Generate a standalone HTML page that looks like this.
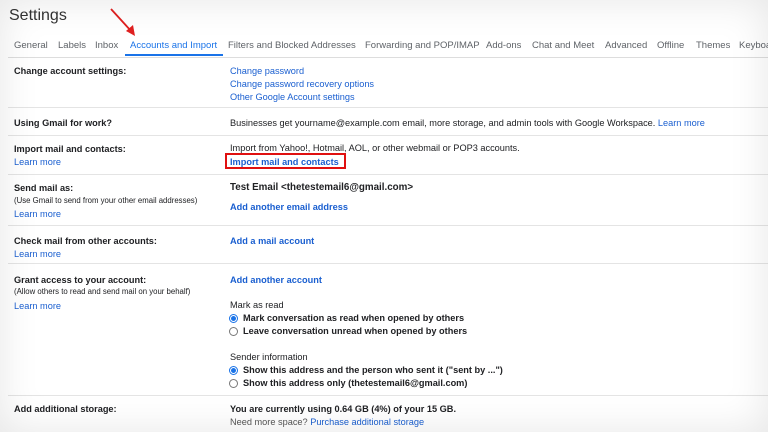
<!DOCTYPE html><html><head><style>
body{margin:0;width:768px;height:432px;overflow:hidden;background:#fff;font-family:"Liberation Sans",sans-serif;font-size:9.2px;color:#202124;position:relative}
.t{position:absolute;white-space:nowrap;line-height:12px;margin-top:2px}
.b{font-weight:bold}
.l{color:#1a5fd0}
.s{font-size:7.8px}
.g{color:#5f6368;font-size:9.5px}
.hr{position:absolute;left:8px;width:760px;height:1px;background:#e4e4e4}
.r{position:absolute;width:7px;height:7px;border-radius:50%;border:1px solid #777;left:229px;margin-top:2px}
.r.on{border-color:#1a73e8;background:radial-gradient(#1a73e8 45%,#fff 55%)}
.vig{position:absolute;inset:0;pointer-events:none;box-shadow:inset 0 0 40px rgba(0,0,0,.1)}
</style></head><body>
<div class="t" style="left:9px;top:4px;font-size:16px;line-height:20px;color:#333">Settings</div>
<div class="t g" style="left:14px;top:38px">General</div>
<div class="t g" style="left:58px;top:38px">Labels</div>
<div class="t g" style="left:95px;top:38px">Inbox</div>
<div class="t" style="left:130px;top:38px;color:#1a73e8;font-size:9.5px">Accounts and Import</div>
<div style="position:absolute;left:125px;top:54px;width:98px;height:2px;background:#1a73e8"></div>
<div class="t g" style="left:228px;top:38px">Filters and Blocked Addresses</div>
<div class="t g" style="left:365px;top:38px">Forwarding and POP/IMAP</div>
<div class="t g" style="left:486px;top:38px">Add-ons</div>
<div class="t g" style="left:532px;top:38px">Chat and Meet</div>
<div class="t g" style="left:605px;top:38px">Advanced</div>
<div class="t g" style="left:657px;top:38px">Offline</div>
<div class="t g" style="left:696px;top:38px">Themes</div>
<div class="t g" style="left:739px;top:38px">Keyboard</div>
<svg style="position:absolute;left:108px;top:6px" width="32" height="32"><line x1="3" y1="3" x2="24" y2="26" stroke="#e02020" stroke-width="1.8"/><path d="M27 30 L18 25 L25 19 Z" fill="#e02020"/></svg>
<div class="hr" style="top:57px;background:#ddd"></div>

<div class="t b" style="left:14px;top:63px">Change account settings:</div>
<div class="t l" style="left:230px;top:63px">Change password</div>
<div class="t l" style="left:230px;top:76px">Change password recovery options</div>
<div class="t l" style="left:230px;top:89px">Other Google Account settings</div>
<div class="hr" style="top:107px"></div>

<div class="t b" style="left:14px;top:115px">Using Gmail for work?</div>
<div class="t" style="left:230px;top:115px">Businesses get yourname@example.com email, more storage, and admin tools with Google Workspace. <span class="l">Learn more</span></div>
<div class="hr" style="top:135px"></div>

<div class="t b" style="left:14px;top:141px">Import mail and contacts:</div>
<div class="t l" style="left:14px;top:154px">Learn more</div>
<div class="t" style="left:230px;top:140px">Import from Yahoo!, Hotmail, AOL, or other webmail or POP3 accounts.</div>
<div class="t b l" style="left:230px;top:154px">Import mail and contacts</div>
<div style="position:absolute;left:225px;top:153px;width:117px;height:12px;border:2px solid #e01010"></div>
<div class="hr" style="top:174px"></div>

<div class="t b" style="left:14px;top:180px">Send mail as:</div>
<div class="t s" style="left:14px;top:193px">(Use Gmail to send from your other email addresses)</div>
<div class="t l" style="left:14px;top:206px">Learn more</div>
<div class="t b" style="left:230px;top:180px;font-size:9.8px">Test Email &lt;thetestemail6@gmail.com&gt;</div>
<div class="t b l" style="left:230px;top:199px">Add another email address</div>
<div class="hr" style="top:225px"></div>

<div class="t b" style="left:14px;top:233px">Check mail from other accounts:</div>
<div class="t l" style="left:14px;top:246px">Learn more</div>
<div class="t b l" style="left:230px;top:233px">Add a mail account</div>
<div class="hr" style="top:263px"></div>

<div class="t b" style="left:14px;top:272px">Grant access to your account:</div>
<div class="t s" style="left:14px;top:284px">(Allow others to read and send mail on your behalf)</div>
<div class="t l" style="left:14px;top:298px">Learn more</div>
<div class="t b l" style="left:230px;top:272px">Add another account</div>
<div class="t" style="left:230px;top:297px">Mark as read</div>
<div class="r on" style="top:312px"></div><div class="t b" style="left:243px;top:310px">Mark conversation as read when opened by others</div>
<div class="r" style="top:325px"></div><div class="t b" style="left:243px;top:323px">Leave conversation unread when opened by others</div>
<div class="t" style="left:230px;top:349px">Sender information</div>
<div class="r on" style="top:364px"></div><div class="t b" style="left:243px;top:362px">Show this address and the person who sent it ("sent by ...")</div>
<div class="r" style="top:377px"></div><div class="t b" style="left:243px;top:375px">Show this address only (thetestemail6@gmail.com)</div>
<div class="hr" style="top:395px"></div>

<div class="t b" style="left:14px;top:401px">Add additional storage:</div>
<div class="t b" style="left:230px;top:401px">You are currently using 0.64 GB (4%) of your 15 GB.</div>
<div class="t" style="left:230px;top:414px;color:#555">Need more space? <span class="l">Purchase additional storage</span></div>
<div class="vig"></div>
</body></html>
